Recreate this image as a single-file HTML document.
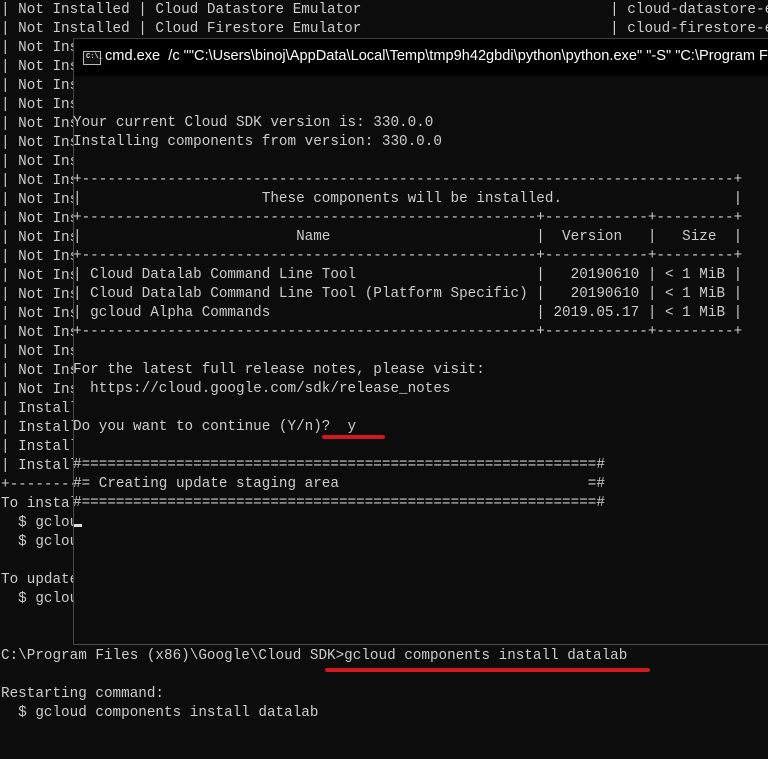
<!DOCTYPE html>
<html><head><meta charset="utf-8"><style>
html,body{margin:0;padding:0;background:#0c0c0c;width:768px;height:759px;overflow:hidden}
pre{margin:0;position:absolute;font-family:"Liberation Mono","DejaVu Sans Mono",monospace;font-size:14.3px;line-height:19px;color:#cccccc;white-space:pre}
#win{position:absolute;left:73px;top:38px;width:694px;height:605px;background:#0c0c0c;border-left:1px solid #4a4a4a;border-bottom:1px solid #4a4a4a;border-top:1px solid #3a3a3a;overflow:hidden}
#title{position:absolute;left:0;top:0;right:0;height:37px;background:#000;overflow:hidden}
#title span{position:absolute;left:31px;top:9px;font-family:"Liberation Sans",sans-serif;font-size:14.6px;color:#fff;white-space:nowrap}
#icon{position:absolute;left:9px;top:12px;width:16px;height:12px;border:1px solid #bbb;background:#111}
#icon b{position:absolute;left:2px;top:1px;font:bold 7px "Liberation Mono",monospace;color:#ddd}
.red{position:absolute;background:#d0181f;height:4px;border-radius:2px}
.cur{position:absolute;left:74px;top:524px;width:8px;height:3px;background:#ddd}
</style></head><body>
<pre style="left:1px;top:1px">| Not Installed | Cloud Datastore Emulator                             | cloud-datastore-e
| Not Installed | Cloud Firestore Emulator                             | cloud-firestore-e
| Not Installed
| Not Installed
| Not Installed
| Not Installed
| Not Installed
| Not Installed
| Not Installed
| Not Installed
| Not Installed
| Not Installed
| Not Installed
| Not Installed
| Not Installed
| Not Installed
| Not Installed
| Not Installed
| Not Installed
| Not Installed
| Not Installed
| Installed
| Installed
| Installed
| Installed
+---------
To install
  $ gcloud
  $ gcloud

To update
  $ gcloud


C:\Program Files (x86)\Google\Cloud SDK>gcloud components install datalab

Restarting command:
  $ gcloud components install datalab</pre>
<div id="win">
<div id="title"><div id="icon"><b>C:\_</b></div><span>cmd.exe&nbsp; /c ""C:\Users\binoj\AppData\Local\Temp\tmp9h42gbdi\python\python.exe" "-S" "C:\Program Files (x86)\Google</span></div>
</div>
<pre style="left:73px;top:114px">Your current Cloud SDK version is: 330.0.0
Installing components from version: 330.0.0

+----------------------------------------------------------------------------+
|                     These components will be installed.                    |
+-----------------------------------------------------+------------+---------+
|                         Name                        |  Version   |   Size  |
+-----------------------------------------------------+------------+---------+
| Cloud Datalab Command Line Tool                     |   20190610 | < 1 MiB |
| Cloud Datalab Command Line Tool (Platform Specific) |   20190610 | < 1 MiB |
| gcloud Alpha Commands                               | 2019.05.17 | < 1 MiB |
+-----------------------------------------------------+------------+---------+

For the latest full release notes, please visit:
  https://cloud.google.com/sdk/release_notes

Do you want to continue (Y/n)?  y

#============================================================#
#= Creating update staging area                             =#
#============================================================#</pre>
<div class="cur"></div>
<div class="red" style="left:322px;top:435px;width:63px"></div>
<div class="red" style="left:325px;top:668px;width:325px"></div>
</body></html>
